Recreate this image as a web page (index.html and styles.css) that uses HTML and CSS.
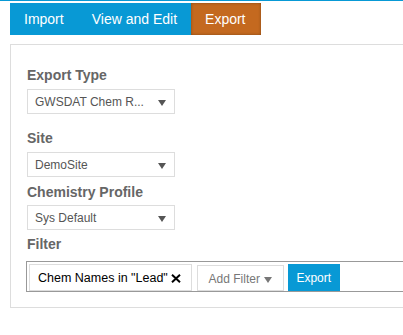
FILE: index.html
```html
<!DOCTYPE html>
<html>
<head>
<meta charset="utf-8">
<link rel="stylesheet" href="styles.css">
</head>
<body>
<div class="topline"></div>
<nav class="tabs">
  <div class="tab">Import</div>
  <div class="tab">View and Edit</div>
  <div class="tab active">Export</div>
</nav>
<section class="panel">
  <div class="label l-type">Export Type</div>
  <div class="select"><span>GWSDAT Chem R...</span><span class="caret"></span></div>
  <div class="label l-site">Site</div>
  <div class="select"><span>DemoSite</span><span class="caret"></span></div>
  <div class="label l-chem">Chemistry Profile</div>
  <div class="select"><span>Sys Default</span><span class="caret"></span></div>
  <div class="label l-filter">Filter</div>
  <div class="filterbox">
    <div class="chip"><span>Chem Names in "Lead"</span><svg class="x" width="10" height="9" viewBox="0 0 10 9"><path d="M1 0.8 L9 8.2 M9 0.8 L1 8.2" stroke="#000" stroke-width="2"/></svg></div>
    <div class="addfilter">Add Filter<span class="caret small"></span></div>
    <div class="exportbtn">Export</div>
  </div>
</section>
</body>
</html>
```
FILE: styles.css
```css
html, body {
  margin: 0;
  padding: 0;
  background: #fff;
  overflow: hidden;
  font-family: "Liberation Sans", Arial, sans-serif;
}
body {
  width: 403px;
  height: 335px;
}
.topline {
  height: 1px;
  background: #0899d5;
}
.tabs {
  display: flex;
  margin: 2px 0 0 10px;
  height: 32px;
}
.tab {
  background: #0899d5;
  color: #fff;
  font-size: 14px;
  line-height: 32px;
  padding: 0 14px;
}
.tab.active {
  background: #c4691f;
  box-shadow: inset 0 0 3px rgba(0,0,0,0.35);
  padding: 0 15px 0 14px;
}
.panel {
  margin: 9px 0 0 10px;
  width: 440px;
  border: 1px solid #ddd;
  padding: 22px 16px 15px 16px;
  box-sizing: border-box;
}
.label {
  font-size: 14px;
  font-weight: bold;
  color: #666;
  line-height: 16px;
  margin-bottom: 6px;
}
.l-site { margin-top: 16px; }
.l-chem { margin-top: 7px; margin-bottom: 5px; }
.l-filter { margin-top: 6px; margin-bottom: 9px; }
.select {
  width: 148px;
  height: 25px;
  box-sizing: border-box;
  border: 1px solid #ddd;
  display: flex;
  align-items: center;
  justify-content: space-between;
  padding: 0 8px 0 7px;
  font-size: 12px;
  color: #555;
}
.caret {
  width: 0;
  height: 0;
  border-left: 4px solid transparent;
  border-right: 4px solid transparent;
  border-top: 6px solid #555;
  margin-top: 2px;
}
.caret.small {
  border-top-color: #777;
  margin-left: 4px;
}
.filterbox {
  margin-left: -1px;
  border: 1px solid #999;
  height: 31px;
  box-sizing: border-box;
  padding: 2px;
  display: flex;
  align-items: flex-start;
  width: 420px;
}
.chip {
  height: 27px;
  box-sizing: border-box;
  border: 1px solid #ddd;
  padding: 0 10px 0 8px;
  display: flex;
  align-items: center;
  font-size: 12.5px;
  color: #000;
  white-space: nowrap;
}
.chip .x {
  margin-left: 3px;
  margin-top: 2px;
  flex: none;
}
.addfilter {
  margin-left: 5px;
  margin-top: 1px;
  height: 26px;
  width: 87px;
  box-sizing: border-box;
  border: 1px solid #ddd;
  display: flex;
  align-items: center;
  justify-content: center;
  font-size: 12px;
  color: #777;
  padding-top: 1px;
  white-space: nowrap;
}
.exportbtn {
  margin-left: 4px;
  height: 27px;
  width: 52px;
  background: #0899d5;
  color: #fff;
  font-size: 12px;
  display: flex;
  align-items: center;
  justify-content: center;
}
```
